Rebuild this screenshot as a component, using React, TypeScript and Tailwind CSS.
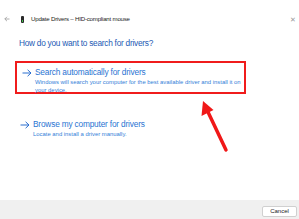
import React from "react";

export default function App() {
  const f = { fontFamily: '"Liberation Sans", Arial, sans-serif' };
  return (
    <div className="relative w-[299px] h-[219px] bg-white overflow-hidden flex flex-col" style={f}>
      {/* title bar */}
      <div className="flex items-center h-[20px] mt-[9px] pl-[3px] pr-[2px]">
        <svg width="6" height="6" viewBox="0 0 6 6" className="ml-[1px]">
          <path d="M5.5 3H0.8M3 0.8L0.8 3L3 5.2" stroke="#9a9a9a" strokeWidth="0.8" fill="none" />
        </svg>
        <div className="ml-[11px] w-[3px] h-[7px] bg-[#2a2a2a] rounded-[1px] relative">
          <div className="absolute left-[1px] top-[4px] w-[1px] h-[2px] bg-[#3fc24a]" />
        </div>
        <span className="ml-[7px] text-[6.1px] tracking-[-0.2px] text-[#1a1a1a] leading-none">Update Drivers – HID-compliant mouse</span>
        <span className="ml-auto text-[7px] text-[#9a9a9a] leading-none mr-[1px]">✕</span>
      </div>
      {/* heading */}
      <div className="mt-[10px] pl-[19px] text-[8.3px] tracking-[-0.26px] text-[#1c5ab4] leading-none">How do you want to search for drivers?</div>
      {/* option 1 */}
      <div className="mt-[14px] ml-[15px] w-[231px] h-[33px] border-2 border-[#f01c1c] flex">
        <div className="pl-[5px] pt-[6px]">
          <svg width="10" height="8" viewBox="0 0 10 8">
            <path d="M0.5 4H9M5.6 0.8L9 4L5.6 7.2" stroke="#2b6fcf" strokeWidth="1" fill="none" />
          </svg>
        </div>
        <div className="pl-[3px] pt-[4px] flex flex-col">
          <span className="text-[8.3px] tracking-[-0.18px] text-[#2a74d2] leading-[11px]">Search automatically for drivers</span>
          <span className="text-[5.9px] text-[#3380d8] leading-[8px] whitespace-nowrap">Windows will search your computer for the best available driver and install it on</span>
          <span className="text-[5.9px] text-[#3380d8] leading-[8px]">your device.</span>
        </div>
      </div>
      {/* option 2 */}
      <div className="mt-[24px] ml-[17px] flex">
        <div className="pl-[3px] pt-[3px]">
          <svg width="10" height="8" viewBox="0 0 10 8">
            <path d="M0.5 4H9M5.6 0.8L9 4L5.6 7.2" stroke="#2b6fcf" strokeWidth="1" fill="none" />
          </svg>
        </div>
        <div className="pl-[3px] flex flex-col">
          <span className="text-[8.3px] tracking-[-0.18px] text-[#2a74d2] leading-[12px]">Browse my computer for drivers</span>
          <span className="text-[5.9px] text-[#3380d8] leading-[8px]">Locate and install a driver manually.</span>
        </div>
      </div>
      {/* footer */}
      <div className="mt-auto h-[19px] bg-[#f0f0f0] flex items-center justify-end pr-[2px]">
        <div className="w-[35px] h-[11px] bg-white border border-[#d0d0d0] rounded-[2px] flex items-center justify-center text-[6px] text-[#1a1a1a] leading-none mt-[3px]">
          Cancel
        </div>
      </div>
      {/* red annotation arrow */}
      <svg className="absolute left-0 top-0" width="299" height="219" viewBox="0 0 299 219">
        <line x1="226" y1="150" x2="208" y2="112" stroke="#f01818" strokeWidth="3.5" strokeLinecap="round" />
        <polygon points="203,101 201.5,116 213.5,110" fill="#f01818" />
      </svg>
    </div>
  );
}
